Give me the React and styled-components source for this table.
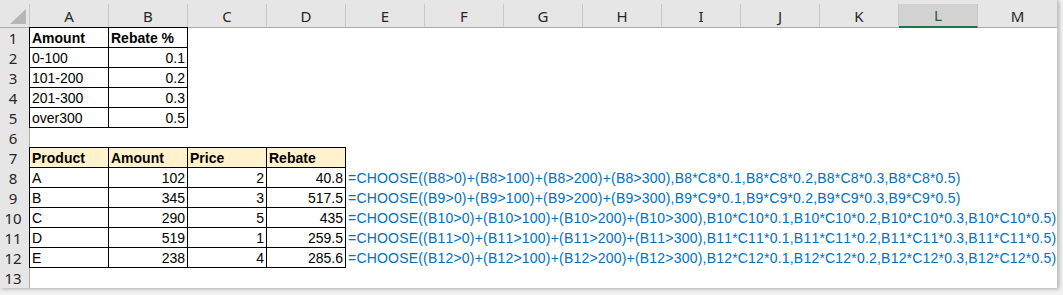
import React from 'react'
import styled, { createGlobalStyle } from 'styled-components'

const GlobalStyle = createGlobalStyle`
  html, body {
    margin:0;
    padding:0;
    background:#f1f1f1;
  }
  body {
    width:1063px;
    height:295px;
    overflow:hidden;
  }
`

const COLS = ['A','B','C','D','E','F','G','H','I','J','K','L','M']
const ACTIVE = 'L'
const GRID = '30px repeat(13, 79px)'

// cell kinds
const h = v => ({ v, bold:true, border:true })
const o = v => ({ v, bold:true, border:true, fill:'#fff2cc' })
const t = v => ({ v, border:true })
const n = v => ({ v, border:true, right:true })

const formula = r =>
  `=CHOOSE((B${r}>0)+(B${r}>100)+(B${r}>200)+(B${r}>300),B${r}*C${r}*0.1,B${r}*C${r}*0.2,B${r}*C${r}*0.3,B${r}*C${r}*0.5)`

const products = [
  ['A','102','2','40.8'],
  ['B','345','3','517.5'],
  ['C','290','5','435'],
  ['D','519','1','259.5'],
  ['E','238','4','285.6'],
]

const rows = [
  { cells:[h('Amount'), h('Rebate %')] },
  { cells:[t('0-100'), n('0.1')] },
  { cells:[t('101-200'), n('0.2')] },
  { cells:[t('201-300'), n('0.3')] },
  { cells:[t('over300'), n('0.5')] },
  { cells:[] },
  { cells:[o('Product'), o('Amount'), o('Price'), o('Rebate')] },
  ...products.map((p, i) => ({
    cells:[t(p[0]), n(p[1]), n(p[2]), n(p[3])],
    f:formula(i + 8),
  })),
  { cells:[] },
]

function App() {
  return (
    <>
      <GlobalStyle />
      <Sheet>
        <HeaderRow>
          <Corner>
            <svg width="16" height="15" viewBox="0 0 16 15">
              <polygon points="16,0 16,15 0,15" fill="#b7b7b7" />
            </svg>
          </Corner>
          {COLS.map(c => (
            <ColHead key={c} $active={c === ACTIVE}>{c}</ColHead>
          ))}
        </HeaderRow>
        <Body>
          {rows.map((row, i) => (
            <React.Fragment key={i}>
              <RowHead>{i + 1}</RowHead>
              {[0,1,2,3].map(j => {
                const c = row.cells[j]
                if (!c) return <Cell key={j} />
                return (
                  <Cell key={j} $border={c.border} $bold={c.bold} $right={c.right} $fill={c.fill}>
                    {c.v}
                  </Cell>
                )
              })}
              <Formula>{row.f}</Formula>
            </React.Fragment>
          ))}
        </Body>
      </Sheet>
    </>
  )
}

export default App

const Sheet=styled.div`
    width:1057px;
    background:#fff;
    border-right:1px solid #c6c6c6;
    box-shadow:1px 1px 4px rgba(0,0,0,0.28);
`
const HeaderRow=styled.div`
    display:grid;
    grid-template-columns:${GRID};
    padding-top:4px;
    background:#e6e6e6;
`
const Corner=styled.div`
    display:flex;
    align-items:flex-end;
    justify-content:flex-end;
    height:24px;
    box-sizing:border-box;
    padding:0 3px 3px 0;
    border-right:1px solid #c8c8c8;
    border-bottom:1px solid #ababab;
`
const ColHead=styled.div`
    display:flex;
    align-items:center;
    justify-content:center;
    height:24px;
    box-sizing:border-box;
    font-family:"Noto Sans", "Open Sans", sans-serif;
    font-size:15px;
    color:${p => p.$active ? '#1e5c3a' : '#262626'};
    background:${p => p.$active ? '#d2d2d2' : 'transparent'};
    border-right:1px solid #c8c8c8;
    border-bottom:${p => p.$active ? '2px solid #217346' : '1px solid #ababab'};
    &:last-child{
      border-right:none;
    }
`
const Body=styled.div`
    display:grid;
    grid-template-columns:${GRID};
    grid-auto-rows:20px;
`
const RowHead=styled.div`
    display:flex;
    align-items:center;
    justify-content:center;
    padding-right:3px;
    background:#e6e6e6;
    border-right:1px solid #ababab;
    font-family:"Noto Sans", "Open Sans", sans-serif;
    font-size:15px;
    color:#262626;
`
const Cell=styled.div`
    position:relative;
    margin:${p => p.$border ? '-1px 0 0 -1px' : '0'};
    border:${p => p.$border ? '1px solid #000' : 'none'};
    background:${p => p.$fill || 'transparent'};
    padding:1px 2px 0 2px;
    font-family:"Liberation Sans", Arial, sans-serif;
    font-size:14px;
    font-kerning:none;
    line-height:18px;
    font-weight:${p => p.$bold ? 700 : 400};
    text-align:${p => p.$right ? 'right' : 'left'};
    color:#000;
    white-space:nowrap;
    overflow:hidden;
`
const Formula=styled.div`
    grid-column:span 9;
    padding:1px 0 0 2px;
    font-family:"Liberation Sans", Arial, sans-serif;
    font-size:14px;
    font-kerning:none;
    line-height:18px;
    letter-spacing:0.2px;
    color:#0070c0;
    white-space:nowrap;
`
